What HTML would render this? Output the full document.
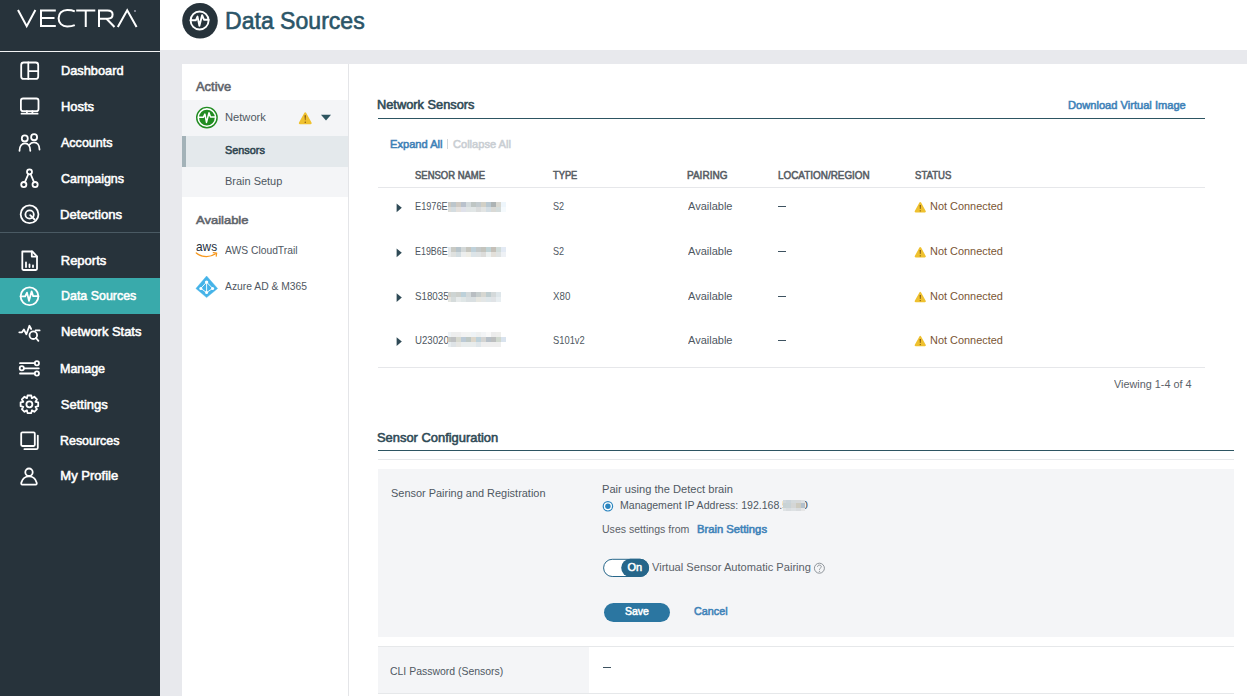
<!DOCTYPE html>
<html><head><meta charset="utf-8">
<style>
*{margin:0;padding:0;box-sizing:border-box}
html,body{width:1247px;height:696px;overflow:hidden;background:#e8e9ed;font-family:"Liberation Sans", sans-serif;position:relative}
.t{position:absolute;white-space:nowrap}
.r{position:absolute}
</style></head><body>
<div class="r" style="left:0px;top:0px;width:160px;height:696px;background:#27333b;"></div>
<div class="r" style="left:160px;top:0px;width:1087px;height:50px;background:#ffffff;"></div>
<div class="r" style="left:182px;top:64px;width:166px;height:632px;background:#ffffff;"></div>
<div class="r" style="left:348px;top:64px;width:1px;height:632px;background:#e4e5e8;"></div>
<div class="r" style="left:349px;top:64px;width:898px;height:632px;background:#ffffff;"></div>
<div class="r" style="left:0px;top:51px;width:160px;height:1px;background:#f2f4f5;"></div>
<div class="r" style="left:0px;top:232px;width:160px;height:1px;background:#4a5a63;"></div>
<div class="r" style="left:0px;top:278px;width:160px;height:36px;background:#39aaab;"></div>
<svg class="r" style="left:0px;top:0px;" width="160" height="50" viewBox="0 0 160 50"><g fill="none" stroke="#ffffff" stroke-width="2" stroke-linejoin="miter">
<path d="M18 10 L26.7 26.2 L35.4 10"/>
<path d="M55.8 10.5 H41 V26 H55.8 M41 18.1 H54.5"/>
<path d="M74.8 11.3 C72.5 10.3 70 10 67.2 10 C62 10 58.6 13.5 58.6 18.2 C58.6 23 62 26.4 67.2 26.4 C70 26.4 72.5 26.1 74.8 25.1"/>
<path d="M76.2 10.5 H95.3 M85.75 10.5 V27"/>
<path d="M99 27 V10.5 H107.5 C110.8 10.5 112.6 12.4 112.6 14.6 C112.6 16.9 110.8 18.8 107.5 18.8 H99 M106.5 18.8 L114.5 27"/>
<path d="M117.8 27 L127.2 10.2 L136.6 27"/>
</g><circle cx="135" cy="11" r="0.9" fill="#aab"/></svg>
<div class="t" style="left:60.78px;top:63px;font-size:13.0px;line-height:16px;color:#ffffff;transform:scaleX(0.9840);transform-origin:0 0;-webkit-text-stroke:0.55px #ffffff;">Dashboard</div>
<div class="t" style="left:60.77px;top:99px;font-size:13.0px;line-height:16px;color:#ffffff;transform:scaleX(0.9931);transform-origin:0 0;-webkit-text-stroke:0.55px #ffffff;">Hosts</div>
<div class="t" style="left:61.20px;top:135px;font-size:13.0px;line-height:16px;color:#ffffff;transform:scaleX(0.9634);transform-origin:0 0;-webkit-text-stroke:0.55px #ffffff;">Accounts</div>
<div class="t" style="left:60.58px;top:171px;font-size:13.0px;line-height:16px;color:#ffffff;transform:scaleX(0.9586);transform-origin:0 0;-webkit-text-stroke:0.55px #ffffff;">Campaigns</div>
<div class="t" style="left:60.45px;top:207px;font-size:13.0px;line-height:16px;color:#ffffff;transform:scaleX(1.0112);transform-origin:0 0;-webkit-text-stroke:0.55px #ffffff;">Detections</div>
<div class="t" style="left:60.76px;top:253px;font-size:13.0px;line-height:16px;color:#ffffff;-webkit-text-stroke:0.55px #ffffff;">Reports</div>
<div class="t" style="left:60.81px;top:288px;font-size:13.0px;line-height:16px;color:#ffffff;transform:scaleX(0.9562);transform-origin:0 0;-webkit-text-stroke:0.55px #ffffff;">Data Sources</div>
<div class="t" style="left:60.77px;top:324px;font-size:13.0px;line-height:16px;color:#ffffff;transform:scaleX(0.9933);transform-origin:0 0;-webkit-text-stroke:0.55px #ffffff;">Network Stats</div>
<div class="t" style="left:60.40px;top:361px;font-size:13.0px;line-height:16px;color:#ffffff;transform:scaleX(0.9588);transform-origin:0 0;-webkit-text-stroke:0.55px #ffffff;">Manage</div>
<div class="t" style="left:60.82px;top:397px;font-size:13.0px;line-height:16px;color:#ffffff;-webkit-text-stroke:0.55px #ffffff;">Settings</div>
<div class="t" style="left:60.41px;top:433px;font-size:13.0px;line-height:16px;color:#ffffff;transform:scaleX(0.9564);transform-origin:0 0;-webkit-text-stroke:0.55px #ffffff;">Resources</div>
<div class="t" style="left:60.36px;top:468px;font-size:13.0px;line-height:16px;color:#ffffff;-webkit-text-stroke:0.55px #ffffff;">My Profile</div>
<svg class="r" style="left:0px;top:0px;" width="160" height="696" viewBox="0 0 160 696">
<g stroke="#fff" stroke-width="1.8" fill="none" stroke-linecap="round" stroke-linejoin="round">
<rect x="21.2" y="62.5" width="17" height="16.4" rx="2.5"/>
<path d="M28.3 62.5 V78.9 M28.3 71.2 H38.2"/>
<rect x="20.9" y="98.5" width="17.6" height="12.6" rx="2.2"/>
<path d="M26.9 111.1 V113.7 M32.4 111.1 V113.7 M21.5 113.7 H37.6"/>
<circle cx="24.8" cy="138.4" r="3"/>
<circle cx="34.1" cy="137.2" r="3"/>
<path d="M19.5 150.8 C19.5 146.2 22 143.4 25 143.4 C28 143.4 30.3 146.2 30.3 150.8"/>
<path d="M29.2 145 C30.2 143.6 32 142.4 34 142.4 C37.2 142.4 39.5 145.3 39.5 149.5"/>
<circle cx="29.5" cy="171.8" r="2.5"/>
<circle cx="23.8" cy="184.6" r="2.6"/>
<circle cx="35.1" cy="184.6" r="2.6"/>
<path d="M28.4 174 L24.9 182.2 M30.6 174 L34 182.2"/>
<circle cx="29.55" cy="214.3" r="8.9"/>
<circle cx="29.6" cy="214.5" r="4.2"/>
<path d="M30.2 215.1 L34.6 219.5"/>
<path d="M22.3 251.5 H32.3 L37 256.3 V268.8 C37 269.5 36.5 270 35.8 270 H23.5 C22.8 270 22.3 269.5 22.3 268.8 Z"/>
<path d="M26 262.5 V267 M29.5 264.5 V267 M33 265.5 V267"/>
<path d="M31.8 251.5 V256.6 H37"/>
</g>
<g stroke="#fff" stroke-width="1.8" fill="none" stroke-linecap="round" stroke-linejoin="round">
<circle cx="29.5" cy="296.3" r="8.9"/>
<path d="M20.6 296.4 H25.2 L27 292.6 L29 300.8 L31.6 291.4 L33.2 296.2 H38.4"/>
</g>
<g stroke="#fff" stroke-width="1.8" fill="none" stroke-linecap="round" stroke-linejoin="round">
<path d="M19.3 332.3 H22 L23.9 329.5 L26.4 334.3 L29.4 325.8 L31.2 329"/>
<circle cx="33.3" cy="335.2" r="3.8"/>
<path d="M36 338 L38.4 340.8 M35.6 330.4 H39.6"/>
<path d="M20 363.2 H34.6 M24 368.3 H38.8 M20 373.5 H34.6"/>
<circle cx="36.9" cy="363.2" r="2.1"/>
<circle cx="21.8" cy="368.3" r="2.1"/>
<circle cx="36.9" cy="373.5" r="2.1"/>
</g>
<g stroke="#fff" stroke-width="1.8" fill="none" stroke-linecap="round" stroke-linejoin="round">
<path d="M35.52 401.83 L38.20 402.43 L38.20 406.17 L35.52 406.77 L35.48 406.88 L36.95 409.20 L34.30 411.85 L31.98 410.38 L31.87 410.42 L31.27 413.10 L27.53 413.10 L26.93 410.42 L26.82 410.38 L24.50 411.85 L21.85 409.20 L23.32 406.88 L23.28 406.77 L20.60 406.17 L20.60 402.43 L23.28 401.83 L23.32 401.72 L21.85 399.40 L24.50 396.75 L26.82 398.22 L26.93 398.18 L27.53 395.50 L31.27 395.50 L31.87 398.18 L31.98 398.22 L34.30 396.75 L36.95 399.40 L35.48 401.72 Z"/>
<circle cx="29.4" cy="404.3" r="3"/>
</g>
<g stroke="#fff" stroke-width="1.8" fill="none" stroke-linecap="round" stroke-linejoin="round">
<rect x="21.2" y="432.4" width="13.6" height="13.6" rx="1.2"/>
<path d="M37.8 435.6 V447.8 C37.8 448.6 37.2 449.2 36.4 449.2 H24.4"/>
<circle cx="29" cy="472.2" r="3.7"/>
<path d="M22.4 484.6 C21.2 484.6 21 483.6 21.4 482.4 C22.6 478.6 25.4 476.4 29 476.4 C32.6 476.4 35.4 478.6 36.6 482.4 C37 483.6 36.8 484.6 35.6 484.6 Z"/>
</g>
</svg>
<svg class="r" style="left:160px;top:0px;" width="80" height="50" viewBox="160 0 80 50"><circle cx="200" cy="20.8" r="17.8" fill="#27333b"/>
<g stroke="#fff" stroke-width="1.9" fill="none" stroke-linejoin="round" stroke-linecap="round">
<circle cx="199.6" cy="20.5" r="9"/>
<path d="M190.6 20.3 H195.8 L197.5 16.6 L199.4 25.8 L202.1 15.2 L204 19.7 H208.6"/>
</g></svg>
<div class="t" style="left:224.76px;top:7px;font-size:23.5px;line-height:29px;color:#2b5568;transform:scaleX(0.9813);transform-origin:0 0;-webkit-text-stroke:0.6px #2b5568;">Data Sources</div>
<div class="t" style="left:195.90px;top:80px;font-size:12.25px;line-height:15px;color:#5f646b;transform:scaleX(1.0528);transform-origin:0 0;-webkit-text-stroke:0.55px #5f646b;">Active</div>
<div class="r" style="left:182px;top:100px;width:166px;height:36px;background:#f4f5f7;"></div>
<div class="r" style="left:182px;top:136px;width:166px;height:31px;background:#e4e9ec;"></div>
<div class="r" style="left:182px;top:136px;width:4px;height:31px;background:#a3b2b8;"></div>
<div class="r" style="left:182px;top:167px;width:166px;height:30px;background:#f4f5f7;"></div>
<svg class="r" style="left:190px;top:100px;" width="30" height="36" viewBox="190 100 30 36"><circle cx="206.9" cy="117.6" r="10.9" fill="#218c21"/><circle cx="206.9" cy="117.6" r="8.7" fill="none" stroke="#fff" stroke-width="1.6"/><path d="M198.6 117.3 H203.3 L204.9 114.1 L206.5 122.4 L209 112.8 L210.5 116.9 H215.4" fill="none" stroke="#fff" stroke-width="1.5" stroke-linejoin="round"/></svg>
<div class="t" style="left:224.51px;top:111px;font-size:10.75px;line-height:13px;color:#4f5862;transform:scaleX(1.0365);transform-origin:0 0;">Network</div>
<svg class="r" style="left:295px;top:108px;" width="40" height="20" viewBox="295 108 40 20"><path d="M305.25 112.2 C305.6 112.2 305.9 112.4 306.1 112.8 L311.5 122.6 C311.9 123.4 311.5 124.3 310.6 124.3 H299.9 C299 124.3 298.6 123.4 299 122.6 L304.4 112.8 C304.6 112.4 304.9 112.2 305.25 112.2 Z" fill="#efc12f"/><path d="M304.5 115.2 H306 L305.6 120.2 H304.9 Z" fill="#8a5a12"/><circle cx="305.25" cy="122.2" r="0.75" fill="#8a5a12"/><path d="M321 114.8 H331 L326 120.4 Z" fill="#2d5560"/></svg>
<div class="t" style="left:224.51px;top:143px;font-size:11.25px;line-height:14px;color:#2f4650;transform:scaleX(0.9656);transform-origin:0 0;-webkit-text-stroke:0.55px #2f4650;">Sensors</div>
<div class="t" style="left:224.52px;top:174px;font-size:11.25px;line-height:14px;color:#4f5862;transform:scaleX(0.9751);transform-origin:0 0;">Brain Setup</div>
<div class="t" style="left:196.00px;top:212px;font-size:11.75px;line-height:15px;color:#5f646b;transform:scaleX(1.1056);transform-origin:0 0;-webkit-text-stroke:0.55px #5f646b;">Available</div>
<svg class="r" style="left:192px;top:240px;" width="30" height="20" viewBox="192 240 30 20"><path d="M196.3 253 C199.5 255.6 203 256.6 206.5 256.6 C209.8 256.6 213 255.6 215.5 253.8" fill="none" stroke="#f7981d" stroke-width="1.3" stroke-linecap="round"/><path d="M213.3 252.6 L216.7 253 L216.2 256.2" fill="none" stroke="#f7981d" stroke-width="1.2" stroke-linecap="round" stroke-linejoin="round"/></svg>
<div class="t" style="left:196.13px;top:239px;font-size:13.0px;line-height:16px;color:#252f3e;transform:scaleX(0.9113);transform-origin:0 0;">aws</div>
<div class="t" style="left:225.00px;top:244px;font-size:10.75px;line-height:13px;color:#4f5862;transform:scaleX(0.9583);transform-origin:0 0;">AWS CloudTrail</div>
<svg class="r" style="left:192px;top:272px;" width="30" height="30" viewBox="192 272 30 30"><path d="M206.6 276 L217.6 288.5 L206.6 297.6 L195.9 288.5 Z" fill="#45b3e8" stroke="#45b3e8" stroke-width="0.4" stroke-linejoin="round"/><g stroke="#fff" stroke-width="0.9" fill="none"><path d="M206.6 282.1 L200.8 288.4 L206.6 292.6 L212.6 288.4 Z M206.6 282.1 V292.6"/></g><g fill="#fff"><circle cx="206.6" cy="282.1" r="1.7"/><circle cx="200.8" cy="288.4" r="1.5"/><circle cx="212.6" cy="288.4" r="1.5"/><circle cx="206.6" cy="292.6" r="1.5"/></g></svg>
<div class="t" style="left:225.00px;top:280px;font-size:10.75px;line-height:13px;color:#4f5862;transform:scaleX(0.9602);transform-origin:0 0;">Azure AD &amp; M365</div>
<div class="t" style="left:377.18px;top:98px;font-size:12.0px;line-height:15px;color:#2f4a56;transform:scaleX(1.0667);transform-origin:0 0;-webkit-text-stroke:0.55px #2f4a56;">Network Sensors</div>
<div class="t" style="left:1067.61px;top:98px;font-size:11.0px;line-height:14px;color:#3e82b8;transform:scaleX(1.0102);transform-origin:0 0;-webkit-text-stroke:0.55px #3e82b8;">Download Virtual Image</div>
<div class="r" style="left:378px;top:118px;width:827px;height:1px;background:#2d5562;"></div>
<div class="t" style="left:389.61px;top:137px;font-size:11.25px;line-height:14px;color:#3e80b6;transform:scaleX(0.9879);transform-origin:0 0;-webkit-text-stroke:0.55px #3e80b6;">Expand All</div>
<div class="r" style="left:447px;top:139px;width:1px;height:10px;background:#d3d6da;"></div>
<div class="t" style="left:453.25px;top:137px;font-size:11.25px;line-height:14px;color:#c9ced3;transform:scaleX(0.9846);transform-origin:0 0;-webkit-text-stroke:0.55px #c9ced3;">Collapse All</div>
<div class="t" style="left:415.27px;top:169px;font-size:10.25px;line-height:13px;color:#575d64;transform:scaleX(0.9242);transform-origin:0 0;-webkit-text-stroke:0.55px #575d64;">SENSOR NAME</div>
<div class="t" style="left:553.01px;top:169px;font-size:10.5px;line-height:13px;color:#575d64;transform:scaleX(0.8852);transform-origin:0 0;-webkit-text-stroke:0.55px #575d64;">TYPE</div>
<div class="t" style="left:687.10px;top:169px;font-size:10.5px;line-height:13px;color:#575d64;transform:scaleX(0.9536);transform-origin:0 0;-webkit-text-stroke:0.55px #575d64;">PAIRING</div>
<div class="t" style="left:777.51px;top:169px;font-size:10.75px;line-height:13px;color:#575d64;transform:scaleX(0.9210);transform-origin:0 0;-webkit-text-stroke:0.55px #575d64;">LOCATION/REGION</div>
<div class="t" style="left:914.87px;top:169px;font-size:10.75px;line-height:13px;color:#575d64;transform:scaleX(0.8913);transform-origin:0 0;-webkit-text-stroke:0.55px #575d64;">STATUS</div>
<div class="r" style="left:378px;top:187px;width:827px;height:1px;background:#e6e7ea;"></div>
<svg class="r" style="left:390px;top:195px;" width="20" height="22" viewBox="390 195 20 22"><path d="M396.6 203.4 L401.8 207.8 L396.6 212.2 Z" fill="#2f4a56"/></svg>
<div class="t" style="left:414.66px;top:199px;font-size:11.5px;line-height:14px;color:#4e5761;transform:scaleX(0.7999);transform-origin:0 0;">E1976E</div>
<svg class="r" style="left:440px;top:195px;" width="80" height="22" viewBox="440 195 80 22"><rect x="448" y="202" width="3" height="5" fill="#cdc9c0"/><rect x="451" y="202" width="5" height="5" fill="#bcc6cc"/><rect x="456" y="202" width="5" height="5" fill="#cfcac3"/><rect x="461" y="202" width="5" height="5" fill="#b9c1cc"/><rect x="466" y="202" width="5" height="5" fill="#d3dadc"/><rect x="471" y="202" width="5" height="5" fill="#bfc6c4"/><rect x="476" y="202" width="5" height="5" fill="#c3cbcf"/><rect x="481" y="202" width="5" height="5" fill="#d2d0c6"/><rect x="486" y="202" width="5" height="5" fill="#b9c8d1"/><rect x="491" y="202" width="5" height="5" fill="#adb3b4"/><rect x="496" y="202" width="5" height="5" fill="#d9d8d1"/><rect x="501" y="202" width="5" height="5" fill="#eef6fc"/><rect x="448" y="207" width="3" height="5" fill="#dcdcd8"/><rect x="451" y="207" width="5" height="5" fill="#d4dce0"/><rect x="456" y="207" width="5" height="5" fill="#e4e0dc"/><rect x="461" y="207" width="5" height="5" fill="#dfe1ea"/><rect x="466" y="207" width="5" height="5" fill="#e0e5e5"/><rect x="471" y="207" width="5" height="5" fill="#e1e6e6"/><rect x="476" y="207" width="5" height="5" fill="#dadcdc"/><rect x="481" y="207" width="5" height="5" fill="#e2e4e3"/><rect x="486" y="207" width="5" height="5" fill="#d3dde3"/><rect x="491" y="207" width="5" height="5" fill="#d9d9d5"/><rect x="496" y="207" width="5" height="5" fill="#d4dcdc"/><rect x="501" y="207" width="5" height="5" fill="#f5fafd"/></svg>
<div class="t" style="left:552.79px;top:199px;font-size:11.5px;line-height:14px;color:#4e5761;transform:scaleX(0.7884);transform-origin:0 0;">S2</div>
<div class="t" style="left:688.00px;top:199px;font-size:11.5px;line-height:14px;color:#4e5761;transform:scaleX(0.9577);transform-origin:0 0;">Available</div>
<div class="r" style="left:778px;top:206px;width:8px;height:1px;background:#3d5260;"></div>
<svg class="r" style="left:910px;top:198px;" width="20" height="18" viewBox="910 198 20 18"><path d="M920.25 202.0 C920.6 202.0 920.9 202.2 921.1 202.6 L925.7 211.0 C926.1 211.8 925.7 212.4 924.8 212.4 H915.7 C914.8 212.4 914.4 211.8 914.8 211.0 L919.4 202.6 C919.6 202.2 919.9 202.0 920.25 202.0 Z" fill="#efc12f"/><path d="M919.6 205.1 H920.9 L920.6 209.1 H919.9 Z" fill="#7a5212"/><circle cx="920.25" cy="210.8" r="0.65" fill="#7a5212"/></svg>
<div class="t" style="left:930.13px;top:198px;font-size:11.75px;line-height:15px;color:#7a5634;transform:scaleX(0.9300);transform-origin:0 0;">Not Connected</div>
<svg class="r" style="left:390px;top:240px;" width="20" height="22" viewBox="390 240 20 22"><path d="M396.6 248.4 L401.8 252.8 L396.6 257.2 Z" fill="#2f4a56"/></svg>
<div class="t" style="left:414.69px;top:244px;font-size:11.5px;line-height:14px;color:#4e5761;transform:scaleX(0.7740);transform-origin:0 0;">E19B6E</div>
<svg class="r" style="left:440px;top:240px;" width="80" height="22" viewBox="440 240 80 22"><rect x="448" y="247" width="3" height="5" fill="#e3e8ec"/><rect x="451" y="247" width="5" height="5" fill="#c9cac4"/><rect x="456" y="247" width="5" height="5" fill="#b7c4cb"/><rect x="461" y="247" width="5" height="5" fill="#d3d8d8"/><rect x="466" y="247" width="5" height="5" fill="#c6c6bf"/><rect x="471" y="247" width="5" height="5" fill="#bfd1da"/><rect x="476" y="247" width="5" height="5" fill="#c4c9c9"/><rect x="481" y="247" width="5" height="5" fill="#c4c4bd"/><rect x="486" y="247" width="5" height="5" fill="#c0d3d6"/><rect x="491" y="247" width="5" height="5" fill="#c5c0b8"/><rect x="496" y="247" width="5" height="5" fill="#d1dcda"/><rect x="501" y="247" width="5" height="5" fill="#e3eaf4"/><rect x="448" y="252" width="3" height="5" fill="#e8eaea"/><rect x="451" y="252" width="5" height="5" fill="#dfe1df"/><rect x="456" y="252" width="5" height="5" fill="#d3dde1"/><rect x="461" y="252" width="5" height="5" fill="#eceeee"/><rect x="466" y="252" width="5" height="5" fill="#eeede6"/><rect x="471" y="252" width="5" height="5" fill="#dce4e8"/><rect x="476" y="252" width="5" height="5" fill="#dfe3e4"/><rect x="481" y="252" width="5" height="5" fill="#dcdcda"/><rect x="486" y="252" width="5" height="5" fill="#ebf0f0"/><rect x="491" y="252" width="5" height="5" fill="#e3e0da"/><rect x="496" y="252" width="5" height="5" fill="#dfe3e3"/><rect x="501" y="252" width="5" height="5" fill="#eef1f5"/></svg>
<div class="t" style="left:552.79px;top:244px;font-size:11.5px;line-height:14px;color:#4e5761;transform:scaleX(0.7884);transform-origin:0 0;">S2</div>
<div class="t" style="left:688.00px;top:244px;font-size:11.5px;line-height:14px;color:#4e5761;transform:scaleX(0.9577);transform-origin:0 0;">Available</div>
<div class="r" style="left:778px;top:251px;width:8px;height:1px;background:#3d5260;"></div>
<svg class="r" style="left:910px;top:243px;" width="20" height="18" viewBox="910 243 20 18"><path d="M920.25 247.0 C920.6 247.0 920.9 247.2 921.1 247.6 L925.7 256.0 C926.1 256.8 925.7 257.4 924.8 257.4 H915.7 C914.8 257.4 914.4 256.8 914.8 256.0 L919.4 247.6 C919.6 247.2 919.9 247.0 920.25 247.0 Z" fill="#efc12f"/><path d="M919.6 250.1 H920.9 L920.6 254.1 H919.9 Z" fill="#7a5212"/><circle cx="920.25" cy="255.8" r="0.65" fill="#7a5212"/></svg>
<div class="t" style="left:930.13px;top:243px;font-size:11.75px;line-height:15px;color:#7a5634;transform:scaleX(0.9300);transform-origin:0 0;">Not Connected</div>
<svg class="r" style="left:390px;top:284px;" width="20" height="22" viewBox="390 284 20 22"><path d="M396.6 293.2 L401.8 297.6 L396.6 302.0 Z" fill="#2f4a56"/></svg>
<div class="t" style="left:414.96px;top:289px;font-size:11.5px;line-height:14px;color:#4e5761;transform:scaleX(0.8463);transform-origin:0 0;">S18035</div>
<svg class="r" style="left:440px;top:284px;" width="80" height="22" viewBox="440 284 80 22"><rect x="448" y="292" width="3" height="5" fill="#d2d0c8"/><rect x="451" y="292" width="5" height="5" fill="#cdd4d3"/><rect x="456" y="292" width="5" height="5" fill="#cdd0cc"/><rect x="461" y="292" width="5" height="5" fill="#bdd1da"/><rect x="466" y="292" width="5" height="5" fill="#d3d9da"/><rect x="471" y="292" width="5" height="5" fill="#b9bec2"/><rect x="476" y="292" width="5" height="5" fill="#c6cdcd"/><rect x="481" y="292" width="5" height="5" fill="#d7d7d1"/><rect x="486" y="292" width="5" height="5" fill="#bfcdd0"/><rect x="491" y="292" width="5" height="5" fill="#d4d9da"/><rect x="496" y="292" width="5" height="5" fill="#dee6ea"/><rect x="448" y="297" width="3" height="5" fill="#e4e5e0"/><rect x="451" y="297" width="5" height="5" fill="#d5dbdb"/><rect x="456" y="297" width="5" height="5" fill="#e6eaea"/><rect x="461" y="297" width="5" height="5" fill="#dfe6e6"/><rect x="466" y="297" width="5" height="5" fill="#d9dfe1"/><rect x="471" y="297" width="5" height="5" fill="#d9dfe1"/><rect x="476" y="297" width="5" height="5" fill="#e6e6e0"/><rect x="481" y="297" width="5" height="5" fill="#e3e6e6"/><rect x="486" y="297" width="5" height="5" fill="#dee6e9"/><rect x="491" y="297" width="5" height="5" fill="#e0e3e6"/><rect x="496" y="297" width="5" height="5" fill="#e8eef1"/></svg>
<div class="t" style="left:552.96px;top:289px;font-size:11.5px;line-height:14px;color:#4e5761;transform:scaleX(0.8443);transform-origin:0 0;">X80</div>
<div class="t" style="left:688.00px;top:289px;font-size:11.5px;line-height:14px;color:#4e5761;transform:scaleX(0.9577);transform-origin:0 0;">Available</div>
<div class="r" style="left:778px;top:296px;width:8px;height:1px;background:#3d5260;"></div>
<svg class="r" style="left:910px;top:287px;" width="20" height="18" viewBox="910 287 20 18"><path d="M920.25 291.8 C920.6 291.8 920.9 292.0 921.1 292.40000000000003 L925.7 300.8 C926.1 301.6 925.7 302.2 924.8 302.2 H915.7 C914.8 302.2 914.4 301.6 914.8 300.8 L919.4 292.40000000000003 C919.6 292.0 919.9 291.8 920.25 291.8 Z" fill="#efc12f"/><path d="M919.6 294.90000000000003 H920.9 L920.6 298.90000000000003 H919.9 Z" fill="#7a5212"/><circle cx="920.25" cy="300.6" r="0.65" fill="#7a5212"/></svg>
<div class="t" style="left:930.13px;top:288px;font-size:11.75px;line-height:15px;color:#7a5634;transform:scaleX(0.9300);transform-origin:0 0;">Not Connected</div>
<svg class="r" style="left:390px;top:328px;" width="20" height="22" viewBox="390 328 20 22"><path d="M396.6 337.2 L401.8 341.6 L396.6 346.0 Z" fill="#2f4a56"/></svg>
<div class="t" style="left:414.68px;top:333px;font-size:11.5px;line-height:14px;color:#4e5761;transform:scaleX(0.8388);transform-origin:0 0;">U23020</div>
<svg class="r" style="left:440px;top:328px;" width="80" height="22" viewBox="440 328 80 22"><rect x="448" y="332" width="3" height="5" fill="#eef3f6"/><rect x="451" y="332" width="5" height="5" fill="#edeeee"/><rect x="456" y="332" width="5" height="5" fill="#eeeeee"/><rect x="461" y="332" width="5" height="5" fill="#f3f3f3"/><rect x="466" y="332" width="5" height="5" fill="#f3f4f3"/><rect x="471" y="332" width="5" height="5" fill="#eef3f6"/><rect x="476" y="332" width="5" height="5" fill="#eef0f0"/><rect x="481" y="332" width="5" height="5" fill="#f2f4f6"/><rect x="486" y="332" width="5" height="5" fill="#f9f9f9"/><rect x="491" y="332" width="5" height="5" fill="#ececec"/><rect x="496" y="332" width="5" height="5" fill="#eeeeec"/><rect x="448" y="337" width="3" height="5" fill="#c2c8c4"/><rect x="451" y="337" width="5" height="5" fill="#bfc1c3"/><rect x="456" y="337" width="5" height="5" fill="#d7d9cf"/><rect x="461" y="337" width="5" height="5" fill="#bccad6"/><rect x="466" y="337" width="5" height="5" fill="#bec8c5"/><rect x="471" y="337" width="5" height="5" fill="#ddd7cb"/><rect x="476" y="337" width="5" height="5" fill="#bdd1da"/><rect x="481" y="337" width="5" height="5" fill="#d4d4d2"/><rect x="486" y="337" width="5" height="5" fill="#b7c0c8"/><rect x="491" y="337" width="5" height="5" fill="#bdbfbf"/><rect x="496" y="337" width="5" height="5" fill="#d0d8cf"/><rect x="501" y="337" width="5" height="5" fill="#d9e3ee"/><rect x="448" y="342" width="3" height="5" fill="#e6ecef"/><rect x="451" y="342" width="5" height="5" fill="#dee3e6"/><rect x="456" y="342" width="5" height="5" fill="#e6e6e3"/><rect x="461" y="342" width="5" height="5" fill="#e8ecec"/><rect x="466" y="342" width="5" height="5" fill="#e8ecec"/><rect x="471" y="342" width="5" height="5" fill="#e8ecec"/><rect x="476" y="342" width="5" height="5" fill="#dfe6ea"/><rect x="481" y="342" width="5" height="5" fill="#eeeeee"/><rect x="486" y="342" width="5" height="5" fill="#eeeeee"/><rect x="491" y="342" width="5" height="5" fill="#eeeeee"/><rect x="496" y="342" width="5" height="5" fill="#eeeeee"/></svg>
<div class="t" style="left:552.78px;top:333px;font-size:11.5px;line-height:14px;color:#4e5761;transform:scaleX(0.8128);transform-origin:0 0;">S101v2</div>
<div class="t" style="left:688.00px;top:333px;font-size:11.5px;line-height:14px;color:#4e5761;transform:scaleX(0.9577);transform-origin:0 0;">Available</div>
<div class="r" style="left:778px;top:340px;width:8px;height:1px;background:#3d5260;"></div>
<svg class="r" style="left:910px;top:331px;" width="20" height="18" viewBox="910 331 20 18"><path d="M920.25 335.8 C920.6 335.8 920.9 336.0 921.1 336.40000000000003 L925.7 344.8 C926.1 345.6 925.7 346.2 924.8 346.2 H915.7 C914.8 346.2 914.4 345.6 914.8 344.8 L919.4 336.40000000000003 C919.6 336.0 919.9 335.8 920.25 335.8 Z" fill="#efc12f"/><path d="M919.6 338.90000000000003 H920.9 L920.6 342.90000000000003 H919.9 Z" fill="#7a5212"/><circle cx="920.25" cy="344.6" r="0.65" fill="#7a5212"/></svg>
<div class="t" style="left:930.13px;top:332px;font-size:11.75px;line-height:15px;color:#7a5634;transform:scaleX(0.9300);transform-origin:0 0;">Not Connected</div>
<div class="r" style="left:378px;top:367px;width:827px;height:1px;background:#e6e7ea;"></div>
<div class="t" style="left:1113.65px;top:377px;font-size:11.5px;line-height:14px;color:#5b6168;transform:scaleX(0.9423);transform-origin:0 0;">Viewing 1-4 of 4</div>
<div class="t" style="left:377.12px;top:431px;font-size:12.25px;line-height:15px;color:#2f4a56;transform:scaleX(1.0533);transform-origin:0 0;-webkit-text-stroke:0.55px #2f4a56;">Sensor Configuration</div>
<div class="r" style="left:378px;top:450px;width:856px;height:1px;background:#2d5562;"></div>
<div class="r" style="left:378px;top:459px;width:856px;height:1px;background:#e6e8ea;"></div>
<div class="r" style="left:378px;top:469px;width:856px;height:168px;background:#f4f5f7;"></div>
<div class="t" style="left:390.71px;top:487px;font-size:10.75px;line-height:13px;color:#4f5862;transform:scaleX(1.0179);transform-origin:0 0;">Sensor Pairing and Registration</div>
<div class="t" style="left:602.21px;top:482px;font-size:11.25px;line-height:14px;color:#4f5862;transform:scaleX(0.9874);transform-origin:0 0;">Pair using the Detect brain</div>
<svg class="r" style="left:600px;top:498px;" width="16" height="16" viewBox="600 498 16 16"><circle cx="607.9" cy="506.3" r="4.7" fill="#fff" stroke="#2b85bf" stroke-width="1.2"/><circle cx="607.9" cy="506.3" r="2.7" fill="#2b85bf"/></svg>
<div class="t" style="left:619.96px;top:499px;font-size:10.5px;line-height:13px;color:#4f5862;transform:scaleX(1.0045);transform-origin:0 0;">Management IP Address: 192.168.5</div>
<div class="t" style="left:801.30px;top:499px;font-size:10.5px;line-height:13px;color:#4f5862;transform:scaleX(1.1905);transform-origin:0 0;">0</div>
<svg class="r" style="left:780px;top:498px;" width="30" height="16" viewBox="780 498 30 16"><rect x="783" y="500" width="3" height="3" fill="#d2d8dc"/><rect x="786" y="500" width="5" height="3" fill="#cbd4da"/><rect x="791" y="500" width="5" height="3" fill="#d4dadc"/><rect x="796" y="500" width="5" height="3" fill="#d6d9db"/><rect x="801" y="500" width="4" height="3" fill="#dde0e2"/><rect x="783" y="503" width="3" height="5" fill="#c8d2d4"/><rect x="786" y="503" width="5" height="5" fill="#c9d3d6"/><rect x="791" y="503" width="5" height="5" fill="#d4d6d6"/><rect x="796" y="503" width="5" height="5" fill="#cdcbc0"/><rect x="801" y="503" width="4" height="5" fill="#b3c0cc"/><rect x="783" y="508" width="3" height="3" fill="#dfe3e5"/><rect x="786" y="508" width="5" height="3" fill="#d9dde0"/><rect x="791" y="508" width="5" height="3" fill="#dde1e3"/><rect x="796" y="508" width="5" height="3" fill="#d9dcdf"/><rect x="801" y="508" width="4" height="3" fill="#e6e6e6"/></svg>
<div class="t" style="left:602.31px;top:523px;font-size:10.75px;line-height:13px;color:#5b6168;transform:scaleX(0.9817);transform-origin:0 0;">Uses settings from</div>
<div class="t" style="left:696.50px;top:523px;font-size:10.75px;line-height:13px;color:#3e82b8;transform:scaleX(1.0459);transform-origin:0 0;-webkit-text-stroke:0.55px #3e82b8;">Brain Settings</div>
<svg class="r" style="left:600px;top:555px;" width="52" height="25" viewBox="600 555 52 25"><rect x="603.6" y="559.3" width="45" height="17.2" rx="8.6" fill="#fff" stroke="#26668a" stroke-width="1"/><rect x="621.2" y="558.8" width="27.9" height="18.1" rx="9.05" fill="#26668a"/></svg>
<div class="t" style="left:627.40px;top:560px;font-size:11.0px;line-height:14px;color:#ffffff;-webkit-text-stroke:0.55px #ffffff;">On</div>
<div class="t" style="left:652.34px;top:560px;font-size:11.0px;line-height:14px;color:#5b6168;transform:scaleX(1.0086);transform-origin:0 0;">Virtual Sensor Automatic Pairing</div>
<svg class="r" style="left:812px;top:562px;" width="16" height="14" viewBox="812 562 16 14"><circle cx="819.4" cy="568.2" r="5.0" fill="none" stroke="#8f959b" stroke-width="1"/><path d="M817.5 566.8 C817.5 565.7 818.4 565.1 819.4 565.1 C820.5 565.1 821.3 565.8 821.3 566.8 C821.3 568 819.5 568.2 819.5 569.5 V570" fill="none" stroke="#8f959b" stroke-width="1"/><circle cx="819.5" cy="571.3" r="0.6" fill="#8f959b"/></svg>
<div class="r" style="left:604px;top:603px;width:66px;height:19px;background:#2b76a1;border-radius:9.5px;"></div>
<div class="t" style="left:624.53px;top:604px;font-size:11.5px;line-height:14px;color:#ffffff;transform:scaleX(0.9132);transform-origin:0 0;-webkit-text-stroke:0.55px #ffffff;">Save</div>
<div class="t" style="left:693.96px;top:604px;font-size:11.25px;line-height:14px;color:#3e82b8;transform:scaleX(0.9586);transform-origin:0 0;-webkit-text-stroke:0.55px #3e82b8;">Cancel</div>
<div class="r" style="left:378px;top:646px;width:856px;height:1px;background:#e6e8ea;"></div>
<div class="r" style="left:378px;top:647px;width:211px;height:46px;background:#f4f5f7;"></div>
<div class="r" style="left:378px;top:693px;width:856px;height:1px;background:#e6e8ea;"></div>
<div class="t" style="left:390.48px;top:663px;font-size:11.75px;line-height:15px;color:#4f5862;transform:scaleX(0.8896);transform-origin:0 0;">CLI Password (Sensors)</div>
<div class="r" style="left:603px;top:667px;width:8px;height:1px;background:#3d5260;"></div>
</body></html>
